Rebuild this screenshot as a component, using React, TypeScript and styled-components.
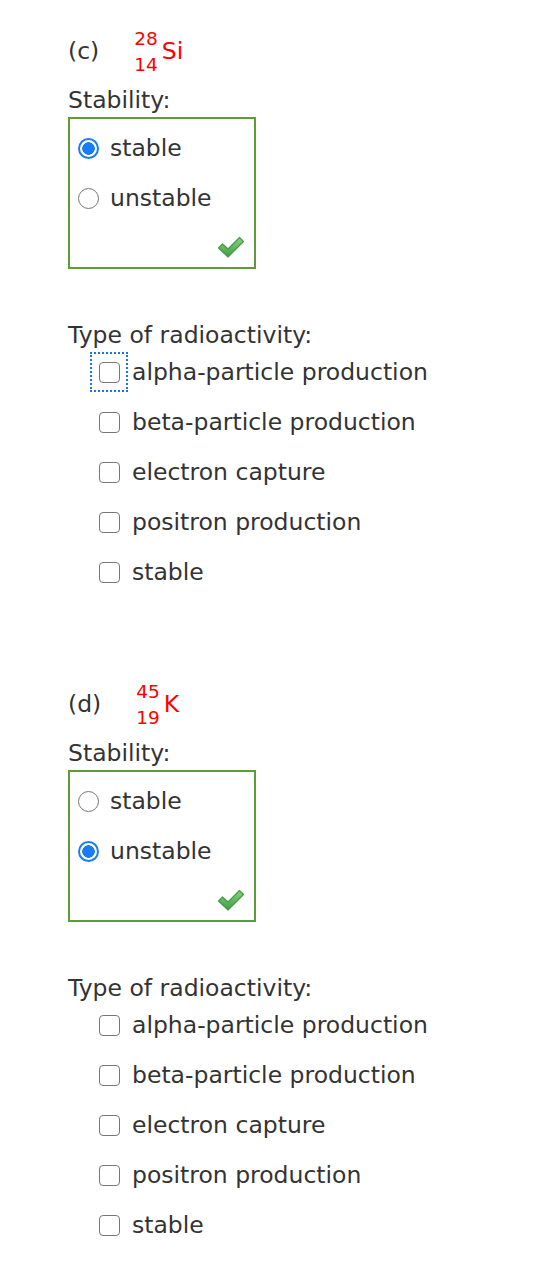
import React from 'react'
import styled, { createGlobalStyle } from 'styled-components'

const GlobalStyle = createGlobalStyle`
  html, body {
    margin: 0;
    padding: 0;
    background: #ffffff;
  }
  body {
    font-family: 'DejaVu Sans', Verdana, sans-serif;
    color: #333333;
  }
`

type Part = {
  letter: string
  mass: string
  atomic: string
  symbol: string
  stable: boolean
  focused?: boolean
}

const parts: Part[] = [
  { letter: '(c)', mass: '28', atomic: '14', symbol: 'Si', stable: true, focused: true },
  { letter: '(d)', mass: '45', atomic: '19', symbol: 'K', stable: false },
]

const types = [
  'alpha-particle production',
  'beta-particle production',
  'electron capture',
  'positron production',
  'stable',
]

const CheckIcon = () => (
  <svg width="28" height="25" viewBox="0 0 28 25">
    <defs>
      <linearGradient id="chk" x1="0" y1="0" x2="0" y2="1">
        <stop offset="0" stopColor="#86d47f" />
        <stop offset="1" stopColor="#3e9c42" />
      </linearGradient>
    </defs>
    <path
      d="M1.5 14 L5.5 10 L11 15 L22.5 3.5 L26.5 7.5 L11 23 Z"
      fill="url(#chk)"
      stroke="#4a9a48"
      strokeWidth="1.2"
      strokeLinejoin="round"
    />
  </svg>
)

const App = () => (
  <>
    <GlobalStyle />
    <Page>
      {parts.map((p) => (
        <Section key={p.letter}>
          <Header>
            <Letter>{p.letter}</Letter>
            <Isotope>
              <Numbers>
                <Num>{p.mass}</Num>
                <Num>{p.atomic}</Num>
              </Numbers>
              <Symbol>{p.symbol}</Symbol>
            </Isotope>
          </Header>
          <Label>Stability:</Label>
          <AnswerBox>
            <RadioRow>
              <Radio checked={p.stable} />
              <span>stable</span>
            </RadioRow>
            <RadioRow>
              <Radio checked={!p.stable} />
              <span>unstable</span>
            </RadioRow>
            <BoxFooter>
              <CheckIcon />
            </BoxFooter>
          </AnswerBox>
          <TypeLabel>Type of radioactivity:</TypeLabel>
          <CheckList>
            {types.map((t, i) => (
              <CheckRow key={t}>
                <Focus focused={!!p.focused && i === 0}>
                  <Checkbox />
                </Focus>
                <span>{t}</span>
              </CheckRow>
            ))}
          </CheckList>
        </Section>
      ))}
    </Page>
  </>
)

export default App

const Page = styled.div`
  padding: 26px 0 30px 68px;
  font-size: 23.5px;
  display: flex;
  flex-direction: column;
  gap: 82px;
`

const Section = styled.div`
  display: flex;
  flex-direction: column;
`

const Header = styled.div`
  height: 52px;
  display: flex;
  align-items: center;
  gap: 35px;
`

const Letter = styled.span`
  line-height: 1;
`

const Isotope = styled.span`
  display: flex;
  align-items: center;
  color: #ff0000;
`

const Numbers = styled.span`
  display: flex;
  flex-direction: column;
  align-items: flex-end;
  gap: 6px;
  font-size: 18.5px;
  line-height: 20px;
`

const Num = styled.span``

const Symbol = styled.span`
  margin-left: 4px;
  line-height: 1;
`

const Label = styled.div`
  margin-top: 8px;
  line-height: 28px;
`

const AnswerBox = styled.div`
  margin-top: 3px;
  border: 2px solid #5e9c37;
  padding: 4px 0 0 8px;
  box-sizing: border-box;
  width: 188px;
  height: 152px;
  display: flex;
  flex-direction: column;
`

const RadioRow = styled.div`
  height: 50px;
  display: flex;
  align-items: center;
  gap: 11px;
`

const Radio = styled.span<{ checked: boolean }>`
  width: 21px;
  height: 21px;
  border-radius: 50%;
  box-sizing: border-box;
  flex-shrink: 0;
  border: ${(p) => (p.checked ? '2px solid #1a7cf5' : '1.5px solid #777777')};
  background: ${(p) =>
    p.checked ? 'radial-gradient(circle, #1a7cf5 0 6px, #ffffff 6.5px)' : '#ffffff'};
`

const BoxFooter = styled.div`
  flex: 1;
  display: flex;
  justify-content: flex-end;
  align-items: flex-end;
  padding: 0 9px 8px 0;
`

const TypeLabel = styled.div`
  margin-top: 52px;
  line-height: 28px;
`

const CheckList = styled.div`
  margin-top: -2px;
  display: flex;
  flex-direction: column;
`

const CheckRow = styled.div`
  height: 50px;
  display: flex;
  align-items: center;
  padding-left: 22px;
  gap: 4px;
`

const Focus = styled.span<{ focused: boolean }>`
  width: 38px;
  height: 40px;
  box-sizing: border-box;
  display: flex;
  align-items: center;
  justify-content: center;
  border: 2px dotted ${(p) => (p.focused ? '#1a73e8' : 'transparent')};
`

const Checkbox = styled.span`
  width: 21px;
  height: 21px;
  box-sizing: border-box;
  border: 1.5px solid #777777;
  border-radius: 4px;
  background: #ffffff;
`
